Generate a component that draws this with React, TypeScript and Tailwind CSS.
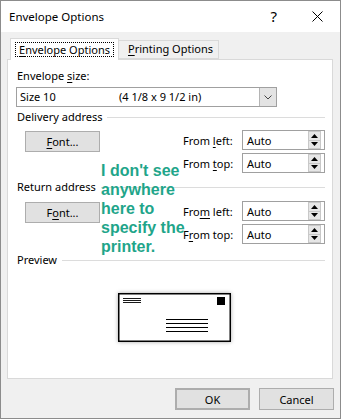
import React from "react";

const uiFont = "font-['Noto_Sans',sans-serif] text-[11px] text-black";

function Key({ children }: { children: React.ReactNode }) {
  return <span className="underline underline-offset-2">{children}</span>;
}

function GroupHeader({ label }: { label: string }) {
  return (
    <div className="flex h-[16px] items-center gap-[5px] pl-[1px]">
      <span className="leading-[16px]">{label}</span>
      <div className="h-px flex-1 bg-[#dcdcdc]" />
    </div>
  );
}

function PushButton({
  children,
  className = "",
}: {
  children: React.ReactNode;
  className?: string;
}) {
  return (
    <button
      className={`flex items-center justify-center border border-[#adadad] bg-[#e1e1e1] leading-none ${className}`}>
      {children}
    </button>
  );
}

function SpinField({ label }: { label: React.ReactNode }) {
  return (
    <div className="flex h-[20px] items-center">
      <span className="w-[59px] leading-none">{label}</span>
      <div className="flex h-[20px] w-[83px] items-center justify-between border border-[#a0a0a0] bg-white pl-[4px] pr-[3px]">
        <span className="leading-none">Auto</span>
        <div className="flex h-[18px] w-[13px] flex-col border border-[#c8c8c8] bg-[#e6e6e6]">
          <div className="flex flex-1 items-center justify-center border-b border-[#c8c8c8]">
            <svg width="7" height="4" viewBox="0 0 7 4">
              <path d="M0 4 L3.5 0 L7 4 Z" fill="#000" />
            </svg>
          </div>
          <div className="flex flex-1 items-center justify-center">
            <svg width="7" height="4" viewBox="0 0 7 4">
              <path d="M0 0 L3.5 4 L7 0 Z" fill="#000" />
            </svg>
          </div>
        </div>
      </div>
    </div>
  );
}

function AddressBlock({
  font,
  left,
  top,
}: {
  font: React.ReactNode;
  left: React.ReactNode;
  top: React.ReactNode;
}) {
  return (
    <div className="flex items-start">
      <PushButton className="ml-[9px] mt-px h-[21px] w-[75px]">{font}</PushButton>
      <div className="ml-auto flex flex-col gap-[3px]">
        <SpinField label={left} />
        <SpinField label={top} />
      </div>
    </div>
  );
}

function EnvelopePreview() {
  return (
    <div className="ml-[102px] w-[113px] shadow-[0_0_4px_rgba(0,0,0,0.35)]">
      <svg width="113" height="49" viewBox="0 0 113 49" className="block">
        <rect x="0.75" y="0.75" width="111.5" height="47.5" fill="#fff" stroke="#000" strokeWidth="1.5" />
        <path d="M5 5.5 H23 M5 7.5 H23 M5 9.5 H23" stroke="#000" strokeWidth="0.9" />
        <rect x="99" y="4" width="8" height="8" fill="#000" />
        <path d="M48 26.5 H90 M48 30.5 H90 M48 34.5 H90 M48 38.5 H90" stroke="#000" strokeWidth="1.2" />
      </svg>
    </div>
  );
}

export default function App() {
  return (
    <div className={`relative flex h-[419px] w-[341px] flex-col border border-[#8c8c8c] bg-[#f0f0f0] ${uiFont}`}>
      {/* title bar */}
      <div className="flex h-[31px] items-center bg-white pl-[8px]">
        <span className="text-[11.5px]">Envelope Options</span>
        <span className="ml-auto mr-[35px] text-[15px] leading-none">?</span>
        <svg width="11" height="11" viewBox="0 0 11 11" className="mr-[17px]">
          <path d="M0.5 0.5 L10.5 10.5 M10.5 0.5 L0.5 10.5" stroke="#000" strokeWidth="1" />
        </svg>
      </div>

      {/* tabs */}
      <div className="ml-[9px] mt-[6px] flex h-[21px] items-end">
        <div className="relative z-10 -mb-px flex h-[22px] w-[109px] items-center justify-center border border-b-0 border-[#d9d9d9] bg-white">
          <span className="border border-dotted border-black px-[3px] leading-[13px]">
            <Key>E</Key>nvelope Options
          </span>
        </div>
        <div className="flex h-[19px] w-[100px] items-center justify-center border border-l-0 border-[#d9d9d9] bg-[#f0f0f0] pl-[4px]">
          <span>
            <Key>P</Key>rinting Options
          </span>
        </div>
      </div>

      {/* tab panel */}
      <div className="ml-[6px] mr-[7px] flex h-[320px] flex-col border border-[#d9d9d9] bg-white pl-[8px] pr-[7px]">
        <div className="mt-[8px] h-[16px] pl-[1px] leading-[16px]">
          Envelope <Key>s</Key>ize:
        </div>
        <div className="mt-[3px] flex h-[20px] w-[261px] items-center border border-[#a0a0a0]">
          <span className="w-[102px] pl-[3px]">Size 10</span>
          <span>(4 1/8 x 9 1/2 in)</span>
          <div className="ml-auto flex h-[18px] w-[17px] items-center justify-center border-l border-[#b4b4b4] bg-[#e3e3e3]">
            <svg width="8" height="5" viewBox="0 0 8 5">
              <path d="M0.5 0.5 L4 4 L7.5 0.5" fill="none" stroke="#444" strokeWidth="1" />
            </svg>
          </div>
        </div>

        <div className="mt-[2px]">
          <GroupHeader label="Delivery address" />
        </div>
        <div className="mt-[5px]">
          <AddressBlock
            font={<span><Key>F</Key>ont...</span>}
            left={<span>From <Key>l</Key>eft:</span>}
            top={<span>From <Key>t</Key>op:</span>}
          />
        </div>

        <div className="mt-[6px]">
          <GroupHeader label="Return address" />
        </div>
        <div className="mt-[6px]">
          <AddressBlock
            font={<span>F<Key>o</Key>nt...</span>}
            left={<span>Fro<Key>m</Key> left:</span>}
            top={<span>F<Key>r</Key>om top:</span>}
          />
        </div>

        <div className="mt-[8px]">
          <GroupHeader label="Preview" />
        </div>
        <div className="mt-[25px]">
          <EnvelopePreview />
        </div>
      </div>

      {/* footer buttons */}
      <div className="mr-[6px] mt-[9px] flex justify-end gap-[9px]">
        <PushButton className="h-[22px] w-[75px] border-2 border-[#0078d7]">OK</PushButton>
        <PushButton className="h-[22px] w-[75px]">Cancel</PushButton>
      </div>

      {/* annotation over the dialog */}
      <div className="absolute left-[100px] top-[160px] font-['Liberation_Sans',Arial,sans-serif] text-[16px] font-bold leading-[19px] text-[#1fa58a]">
        I don't see
        <br />
        anywhere
        <br />
        here to
        <br />
        specify the
        <br />
        printer.
      </div>
    </div>
  );
}
